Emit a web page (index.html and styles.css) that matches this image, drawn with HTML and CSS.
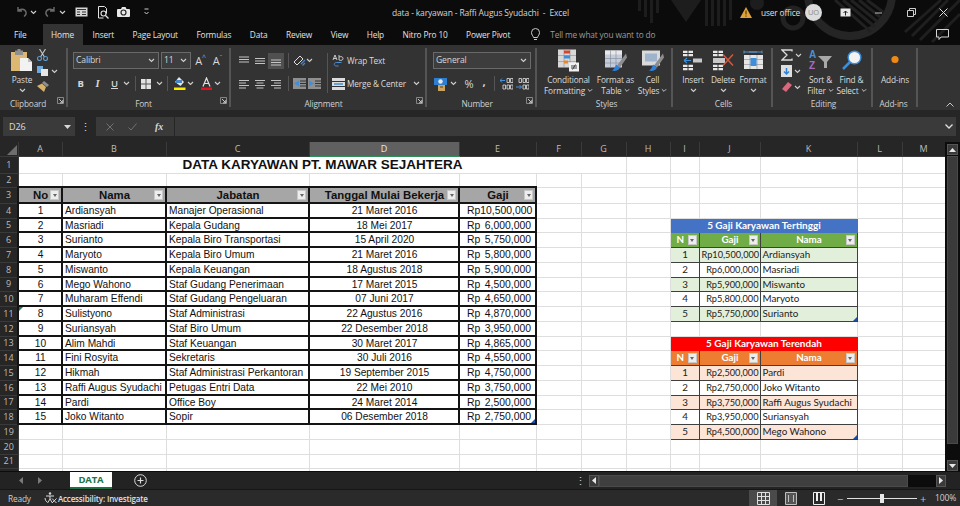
FILE: index.html
```html
<!DOCTYPE html>
<html lang="id">
<head>
<meta charset="utf-8">
<title>data - karyawan - Raffi Augus Syudachi - Excel</title>
<link rel="stylesheet" href="styles.css">
</head>
<body>
<svg class="defs" width="0" height="0">
  <symbol id="chev" viewBox="0 0 7 5"><path d="M1 1l2.500 2.500L6 1" fill="none" stroke="#d0d0d0" stroke-width="1.100"/></symbol>
  <symbol id="launch" viewBox="0 0 7 7"><path d="M.5 6.500V.5h6v6z" fill="none" stroke="#9a9a9a" stroke-width=".8"/><path d="M2 2l3.500 3.500M5.800 3v2.800H3" fill="none" stroke="#d8d8d8" stroke-width=".9"/></symbol>
  <symbol id="lines-l" viewBox="0 0 12 10"><path d="M1 1.500h10M1 4h7M1 6.500h10M1 9h7" stroke="#c4c4c4" stroke-width="1"/></symbol>
  <symbol id="lines-c" viewBox="0 0 12 10"><path d="M1 1.500h10M2.500 4h7M1 6.500h10M2.500 9h7" stroke="#c4c4c4" stroke-width="1"/></symbol>
  <symbol id="lines-r" viewBox="0 0 12 10"><path d="M1 1.500h10M4 4h7M1 6.500h10M4 9h7" stroke="#c4c4c4" stroke-width="1"/></symbol>
  <symbol id="cells" viewBox="0 0 10 6"><path d="M0 0h4.500v6H0zM5.500 0H10v6H5.500z" fill="#e8e8e8"/><path d="M0 3h10" stroke="#333" stroke-width="1"/></symbol>
</svg>

<header class="chrome">
  <svg class="pattern" width="960" height="45" viewBox="0 0 960 45">
    <g fill="#1d1d1d">
      <path d="M638 0h3v11h-3zM644 0h3v17h-3zM650 0h3v23h-3zM656 0h3v13h-3z"/>
      <path d="M671 0h30l-15 22z"/>
      <path d="M705 0h3v26h-3zM711 0h3v26h-3zM717 0h3v26h-3zM723 0h3v26h-3zM729 0h3v20h-3z"/>
      <circle cx="757" cy="3" r="7"/>
    </g>
    <circle cx="793" cy="18" r="10" fill="none" stroke="#222" stroke-width="5"/>
    <circle cx="850" cy="-6" r="42" fill="none" stroke="#252525" stroke-width="8"/>
    <path d="M835 0l36 32M843 0l32 27M851 0l27 22M859 0l21 17M867 0l16 12" stroke="#212121" stroke-width="3"/>
    <path d="M905 32l36-32M912 36l36-36M920 40l40-40M932 42l28-28" stroke="#1f1f1f" stroke-width="3"/>
  </svg>
  <div class="titlebar">
    <div class="qat">
      <svg class="q1" width="13" height="12" viewBox="0 0 13 12"><path d="M3 1v4h4M3 5c2-2.500 7-2.500 8 1 .5 2-.5 3.500-2 4.500" fill="none" stroke="#6a6a6a" stroke-width="1.400"/></svg>
      <svg class="qc" width="7" height="5"><use href="#chev" class="dim"/></svg>
      <svg class="q2" width="13" height="12" viewBox="0 0 13 12"><path d="M10 1v4H6M10 5C8 2.500 3 2.500 2 6c-.5 2 .5 3.500 2 4.500" fill="none" stroke="#6a6a6a" stroke-width="1.400"/></svg>
      <svg class="qc" width="7" height="5"><use href="#chev" class="dim"/></svg>
      <svg class="q3" width="13" height="10" viewBox="0 0 13 10"><path d="M.5.500h12v9H.5z" fill="#d6d6d6"/><path d="M2 2.500h9M2 5h3M7 5h4M2 7.500h3M7 7.500h4" stroke="#333" stroke-width="1"/></svg>
      <svg class="q4" width="12" height="13" viewBox="0 0 12 13"><path d="M1.500.500h6l2 2v5M1.500.500v11.500h5" fill="none" stroke="#e4e4e4" stroke-width="1"/><circle cx="6.500" cy="7.500" r="2.500" fill="none" stroke="#e4e4e4" stroke-width="1.100"/><path d="M8.500 9.500l3 3" stroke="#e4e4e4" stroke-width="1.300"/></svg>
      <svg class="q5" width="13" height="10" viewBox="0 0 13 10"><path d="M1 2h3l1-2h3.500l1 2H12a1 1 0 0 1 1 1v6a1 1 0 0 1-1 1H1a1 1 0 0 1-1-1V3a1 1 0 0 1 1-1z" fill="#e8e8e8"/><circle cx="6.500" cy="5.500" r="2.500" fill="none" stroke="#222" stroke-width="1.200"/></svg>
      <svg class="q6" width="7" height="8" viewBox="0 0 7 8"><path d="M1.500 1h4M1.500 4l2 2 2-2" fill="none" stroke="#cfcfcf" stroke-width="1"/></svg>
    </div>
    <div class="doc">data - karyawan - Raffi Augus Syudachi &nbsp;-&nbsp; Excel</div>
    <div class="winbar">
      <svg class="warn" width="12" height="11" viewBox="0 0 12 11"><path d="M6 0l6 11H0z" fill="#e0a23a"/><path d="M6 3.500v4M6 8.500v1.200" stroke="#3a2a00" stroke-width="1"/></svg>
      <span class="user">user office</span>
      <span class="avatar">UO</span>
      <svg class="w1" width="11" height="9" viewBox="0 0 11 9"><path d="M.5.500h10v8H.5z" fill="#e6e6e6"/><path d="M5.500 7.500V3M3.500 5l2-2 2 2" fill="none" stroke="#222" stroke-width="1"/></svg>
      <svg class="w2" width="9" height="9" viewBox="0 0 9 9"><path d="M1 5h7" stroke="#bdbdbd" stroke-width="1"/></svg>
      <svg class="w3" width="9" height="9" viewBox="0 0 9 9"><path d="M.5 2.500h6v6h-6zM2.500 2.500v-2h6v6h-2" fill="none" stroke="#cfcfcf" stroke-width="1"/></svg>
      <svg class="w4" width="9" height="9" viewBox="0 0 9 9"><path d="M.5.500l8 8M8.500.500l-8 8" stroke="#dedede" stroke-width="1"/></svg>
    </div>
  </div>
  <nav class="tabs">
    <span class="tab file">File</span>
    <span class="tab home">Home</span>
    <span class="tab">Insert</span>
    <span class="tab">Page Layout</span>
    <span class="tab">Formulas</span>
    <span class="tab">Data</span>
    <span class="tab">Review</span>
    <span class="tab">View</span>
    <span class="tab">Help</span>
    <span class="tab">Nitro Pro 10</span>
    <span class="tab">Power Pivot</span>
    <svg class="bulb" width="9" height="13" viewBox="0 0 9 13"><path d="M2.500 9.500C2 7.500.5 7 .5 4.500a4 4 0 0 1 8 0c0 2.500-1.500 3-2 5zM3 11.500h3" fill="none" stroke="#c8c8c8" stroke-width="1"/></svg>
    <span class="tell">Tell me what you want to do</span>
    <svg class="comment" width="13" height="11" viewBox="0 0 13 11"><path d="M.5.500h12v7.500H5L3 10.500V8H.5z" fill="none" stroke="#d4d4d4" stroke-width="1"/></svg>
  </nav>
</header>

<section class="ribbon">
  <div class="grp g-clip">
    <div class="body clip-body">
      <div class="big paste">
        <svg width="24" height="23" viewBox="0 0 24 23"><path d="M1 3h16v19H1z" fill="#dcb873"/><path d="M5 1.500h8V6H5z" fill="#8f8f8f"/><path d="M7.500 0h3v2h-3z" fill="#8f8f8f"/><path d="M10 9h8l4 4v9H10z" fill="#f2f2f2"/><path d="M18 9v4h4" fill="#bdbdbd"/></svg>
        <span>Paste</span>
        <svg class="c" width="7" height="5"><use href="#chev"/></svg>
      </div>
      <div class="clip-side">
        <svg width="11" height="12" viewBox="0 0 11 12"><path d="M2.500 0l5 8M8.500 0l-5 8" stroke="#c8c8c8" stroke-width="1.100"/><circle cx="2.500" cy="9.500" r="2" fill="none" stroke="#5b9bd5" stroke-width="1.100"/><circle cx="8.500" cy="9.500" r="2" fill="none" stroke="#5b9bd5" stroke-width="1.100"/></svg>
        <div class="copy"><svg width="11" height="10" viewBox="0 0 11 10"><path d="M0 0h6v7H0z" fill="#6fa8dc"/><path d="M4 3h7v7H4z" fill="#e6e6e6"/></svg><svg width="7" height="5"><use href="#chev"/></svg></div>
        <svg width="12" height="11" viewBox="0 0 12 11"><path d="M7 0l5 4-2 2-5-4z" fill="#8f8f8f"/><path d="M5 2.500L9 6l-2 5-7-6z" fill="#d9b26c"/></svg>
      </div>
    </div>
    <div class="lbl"><span>Clipboard</span><svg class="launch" width="7" height="7"><use href="#launch"/></svg></div>
  </div>

  <div class="grp g-font">
    <div class="body rows">
      <div class="row">
        <div class="field name"><span>Calibri</span><svg width="7" height="5"><use href="#chev"/></svg></div>
        <div class="field size"><span>11</span><svg width="7" height="5"><use href="#chev"/></svg></div>
        <span class="t a1">A<sup>^</sup></span>
        <span class="t a2">A<sup>ˇ</sup></span>
      </div>
      <div class="row">
        <span class="t b">B</span><span class="t i">I</span><span class="t u">U</span>
        <svg class="cv" width="7" height="5"><use href="#chev"/></svg>
        <span class="sep s5"></span>
        <span class="t w20"><svg width="10" height="10" viewBox="0 0 10 10"><path d="M0 0h10v10H0z" fill="#e2e2e2"/><path d="M5 0v10M0 5h10" stroke="#555" stroke-width="1"/></svg></span>
        <svg class="cv" width="7" height="5"><use href="#chev"/></svg>
        <span class="sep s4"></span>
        <span class="t"><svg width="13" height="13" viewBox="0 0 13 13"><path d="M6 0l5 5-3.500 4L2 5z" fill="#e6e6e6"/><path d="M3 3h6v3H3z" fill="#4a86c5"/><path d="M1 10.500h11.500V13H1z" fill="#ffeb00"/></svg></span>
        <svg class="cv" width="7" height="5"><use href="#chev"/></svg>
        <span class="t ml4"><svg width="13" height="13" viewBox="0 0 13 13"><path d="M3 9.500L6.500 1 10 9.500M4.500 6.500h4" fill="none" stroke="#e2e2e2" stroke-width="1.200"/><path d="M1 10.500h11V13H1z" fill="#e8101c"/></svg></span>
        <svg class="cv" width="7" height="5"><use href="#chev"/></svg>
      </div>
    </div>
    <div class="lbl shift"><span>Font</span><svg class="launch" width="7" height="7"><use href="#launch"/></svg></div>
  </div>

  <div class="grp g-align">
    <div class="body align-body">
      <div class="rows align-l">
        <div class="row">
          <span class="t"><svg width="12" height="10" viewBox="0 0 12 10"><path d="M1 1h10M1 3.500h10M1 6h10" stroke="#c4c4c4"/></svg></span>
          <span class="t"><svg width="12" height="10" viewBox="0 0 12 10"><path d="M1 2.500h10M1 5h10M1 7.500h10" stroke="#c4c4c4"/></svg></span>
          <span class="t on"><svg width="12" height="10" viewBox="0 0 12 10"><path d="M1 4h10M1 6.500h10M1 9h10" stroke="#c4c4c4"/></svg></span>
          <span class="sep s3"></span>
          <span class="t w14"><svg width="13" height="12" viewBox="0 0 13 12"><path d="M1 7l6-6 3 3-6 6z" fill="none" stroke="#dedede"/><path d="M8 9l4-4M9.500 10.500l2.500-2.500" stroke="#4a86c5" stroke-width="1.200"/></svg></span>
          <svg class="cv" width="7" height="5"><use href="#chev"/></svg>
        </div>
        <div class="row">
          <span class="t"><svg width="12" height="10"><use href="#lines-l"/></svg></span>
          <span class="t"><svg width="12" height="10"><use href="#lines-c"/></svg></span>
          <span class="t"><svg width="12" height="10"><use href="#lines-r"/></svg></span>
          <span class="sep s3"></span>
          <span class="t w14"><svg width="13" height="11" viewBox="0 0 13 11"><path d="M0 0h13v11H0z" fill="#8f8f8f"/><path d="M7 3h6M7 5.500h6M7 8h6" stroke="#333"/><path d="M6 2.500v6L1 5.500z" fill="#3f8fd8"/></svg></span>
          <span class="t w17"><svg width="13" height="11" viewBox="0 0 13 11"><path d="M0 0h13v11H0z" fill="#8f8f8f"/><path d="M7 3h6M7 5.500h6M7 8h6" stroke="#333"/><path d="M1 2.500v6l5-3z" fill="#3f8fd8"/></svg></span>
        </div>
      </div>
      <span class="sep tall"></span>
      <div class="rows align-r">
        <div class="row">
          <svg width="13" height="13" viewBox="0 0 13 13"><path d="M1 6l2-5 2 5M1.700 4.500h2.600M7 1v5c2.500 1 4 0 4-1.500S9.500 2 7 3" fill="none" stroke="#d6d6d6" stroke-width=".9"/><path d="M9.500 8.500h-5c-3 0-3 3.500 0 3.500h2" fill="none" stroke="#4a90d9" stroke-width="1"/></svg>
          <span class="txt">Wrap Text</span>
        </div>
        <div class="row">
          <svg width="13" height="12" viewBox="0 0 13 12"><path d="M0 0h13v12H0z" fill="#dcdcdc"/><path d="M0 3.500h13M0 8.500h13" stroke="#333"/><path d="M2 6h9" stroke="#3f8fd8" stroke-width="1.500"/></svg>
          <span class="txt">Merge &amp; Center</span>
          <svg class="cv mchev" width="7" height="5"><use href="#chev"/></svg>
        </div>
      </div>
    </div>
    <div class="lbl shift"><span>Alignment</span><svg class="launch" width="7" height="7"><use href="#launch"/></svg></div>
  </div>

  <div class="grp g-num">
    <div class="body rows">
      <div class="row"><div class="field general"><span>General</span><svg width="7" height="5"><use href="#chev"/></svg></div></div>
      <div class="row num-tools">
        <span class="t w14"><svg width="14" height="14" viewBox="0 0 14 14"><path d="M0 1h13v7H0z" fill="#2f7fd0"/><circle cx="6.500" cy="4.500" r="2.200" fill="#e8e8e8"/><path d="M4 8h7v6H4z" fill="#c9a35f"/><path d="M6 10h3" stroke="#5a4420"/></svg></span>
        <svg class="cv" width="7" height="5"><use href="#chev"/></svg>
        <span class="t pct">%</span>
        <span class="t comma">,</span>
        <span class="sep s4"></span>
        <span class="t dec"><svg width="13" height="13" viewBox="0 0 13 13"><path d="M0 3.500h5M0 3.500l2-2M0 3.500l2 2" fill="none" stroke="#4a90d9"/><path d="M7 1.500h2.500v4H7zM10.500 1.500H13v4h-2.500zM3 8h2.500v4H3zM7 8h2.500v4H7zM10.500 8H13v4h-2.500z" fill="none" stroke="#cfcfcf" stroke-width=".9"/></svg></span>
        <span class="t dec"><svg width="13" height="13" viewBox="0 0 13 13"><path d="M3 1.500h2.500v4H3zM7 1.500h2.500v4H7zM10.500 1.500H13v4h-2.500zM7 8h2.500v4H7zM10.500 8H13v4h-2.500z" fill="none" stroke="#cfcfcf" stroke-width=".9"/><path d="M0 10h5.500M5.500 10l-2-2M5.500 10l-2 2" fill="none" stroke="#4a90d9"/></svg></span>
      </div>
    </div>
    <div class="lbl shift"><span>Number</span><svg class="launch" width="7" height="7"><use href="#launch"/></svg></div>
  </div>

  <div class="grp g-styles">
    <div class="body bigs">
      <div class="big w49">
        <svg width="21" height="22" viewBox="0 0 21 22"><path d="M0 0h18v18H0z" fill="#d8d8d8"/><path d="M6 0v18M12 0v18M0 6h18M0 12h18" stroke="#8c8c8c" stroke-width=".6"/><path d="M6 1h6v3H6z" fill="#d8452e"/><path d="M6 6h6v3H6z" fill="#3f8fd8"/><path d="M6 11h4v3H6z" fill="#e8862e"/><path d="M11 13h10v9H11z" fill="#f0f0f0"/><path d="M13 16.500h6M13 18.500h6M17.500 15l-3 5" stroke="#333" stroke-width=".9"/></svg>
        <span>Conditional</span><span>Formatting <svg width="6" height="5"><use href="#chev"/></svg></span>
      </div>
      <div class="big w45">
        <svg width="22" height="22" viewBox="0 0 22 22"><path d="M0 1h17v17H0z" fill="#c3ccd8"/><path d="M0 1h17v4H0z" fill="#e8e8e8"/><path d="M5.500 1v17M11 1v17M0 9h17M0 13.500h17" stroke="#7f8a99" stroke-width=".6"/><path d="M21 4l-9 12 3 2 7-10z" fill="#8d8d8d"/><path d="M11 15l4 3c-1 3-5 4-8 3 2-1 3-3 4-6z" fill="#2f80d8"/></svg>
        <span>Format as</span><span>Table <svg width="6" height="5"><use href="#chev"/></svg></span>
      </div>
      <div class="big w29">
        <svg width="22" height="22" viewBox="0 0 22 22"><path d="M0 1h18v15H0z" fill="#dadada"/><path d="M3 4h12v8H3z" fill="#9db4cc"/><path d="M21 4l-9 12 3 2 7-10z" fill="#8d8d8d"/><path d="M11 15l4 3c-1 3-5 4-8 3 2-1 3-3 4-6z" fill="#2f80d8"/></svg>
        <span>Cell</span><span>Styles <svg width="6" height="5"><use href="#chev"/></svg></span>
      </div>
    </div>
    <div class="lbl"><span>Styles</span></div>
  </div>

  <div class="grp g-cells">
    <div class="body bigs">
      <div class="big w30">
        <svg width="20" height="20" viewBox="0 0 20 20"><use href="#cells" x="0" y="0" width="10" height="6"/><use href="#cells" x="0" y="14" width="10" height="6"/><path d="M10 8h9v4h-9z" fill="#c8c8c8"/><path d="M1 10h7M1 10l3-2.500M1 10l3 2.500" fill="none" stroke="#3f8fd8" stroke-width="1.100"/></svg>
        <span>Insert</span><svg class="c" width="7" height="5"><use href="#chev"/></svg>
      </div>
      <div class="big w30">
        <svg width="21" height="20" viewBox="0 0 21 20"><use href="#cells" x="0" y="0" width="10" height="6"/><use href="#cells" x="0" y="14" width="10" height="6"/><path d="M0 7.500h12v5H0z" fill="#c8c8c8"/><path d="M10 4l10 11M20 4L10 15" stroke="#d8563a" stroke-width="1.500"/></svg>
        <span>Delete</span><svg class="c" width="7" height="5"><use href="#chev"/></svg>
      </div>
      <div class="big w30">
        <svg width="21" height="21" viewBox="0 0 21 21"><path d="M1 2h18M1 .500v3M19 .500v3M6 2h8" stroke="#5b9bd5" stroke-width=".9"/><path d="M1 5h19v14H1z" fill="#e6e6e6"/><path d="M7 5v14M14 5v14M1 9.500h19M1 14.500h19" stroke="#888" stroke-width=".6"/><path d="M7.500 8h6v8h-6z" fill="#3f8fd8"/></svg>
        <span>Format</span><svg class="c" width="7" height="5"><use href="#chev"/></svg>
      </div>
    </div>
    <div class="lbl"><span>Cells</span></div>
  </div>

  <div class="grp g-edit">
    <div class="body bigs">
      <div class="edit-side">
        <div class="es"><svg width="12" height="12" viewBox="0 0 12 12"><path d="M11 2.500V1H1l5 5-5 5h10V9.500" fill="none" stroke="#dcdcdc" stroke-width="1.300"/></svg><svg width="7" height="5"><use href="#chev"/></svg></div>
        <div class="es"><svg width="11" height="12" viewBox="0 0 11 12"><path d="M0 0h11v12H0z" fill="#dedede"/><path d="M5.500 3v6M3 6.500l2.500 2.500L8 6.500" fill="none" stroke="#2f80d8" stroke-width="1.500"/></svg><svg width="7" height="5"><use href="#chev"/></svg></div>
        <div class="es"><svg width="11" height="10" viewBox="0 0 11 10"><path d="M7 0l4 3-6 7-4-3z" fill="#d8687e"/></svg><svg width="7" height="5"><use href="#chev"/></svg></div>
      </div>
      <div class="big w31">
        <svg width="23" height="23" viewBox="0 0 23 23"><text x="0" y="9" class="sa">A</text><text x="0" y="20" class="sz">Z</text><path d="M9 7h14l-5 6v6h-3v-6z" fill="#a8a8a8"/></svg>
        <span>Sort &amp;</span><span>Filter <svg width="6" height="5"><use href="#chev"/></svg></span>
      </div>
      <div class="big w31">
        <svg width="20" height="21" viewBox="0 0 20 21"><circle cx="12.500" cy="7.500" r="6.300" fill="#f2f2f2" stroke="#3f8fd8" stroke-width="1.500"/><path d="M8 12l-7 7" stroke="#3f8fd8" stroke-width="2.500"/></svg>
        <span>Find &amp;</span><span>Select <svg width="6" height="5"><use href="#chev"/></svg></span>
      </div>
    </div>
    <div class="lbl"><span>Editing</span></div>
  </div>

  <div class="grp g-add">
    <div class="body bigs">
      <div class="big w44">
        <svg width="22" height="22" viewBox="0 0 22 22"><circle cx="11" cy="10" r="3.600" fill="#f08a12"/></svg>
        <span>Add-ins</span>
      </div>
    </div>
    <div class="lbl"><span>Add-ins</span></div>
  </div>

  <div class="collapse"><svg width="8" height="5" viewBox="0 0 8 5"><path d="M.5 4.500L4 1l3.500 3.500" fill="none" stroke="#c8c8c8"/></svg></div>
</section>

<section class="formula">
  <div class="namebox"><span>D26</span><svg width="7" height="4" viewBox="0 0 7 4"><path d="M0 0h7L3.500 4z" fill="#d8d8d8"/></svg></div>
  <div class="dots">⋮</div>
  <div class="fbtns">
    <svg width="8" height="8" viewBox="0 0 8 8"><path d="M.5.500l7 7M7.500.500l-7 7" stroke="#707070" stroke-width="1"/></svg>
    <svg width="9" height="8" viewBox="0 0 9 8"><path d="M.5 4.500L3 7l5.500-6.500" fill="none" stroke="#707070" stroke-width="1"/></svg>
    <span class="fx">fx</span>
  </div>
  <div class="finput"><svg width="8" height="5" viewBox="0 0 8 5"><path d="M.5.500L4 4 7.500.500" fill="none" stroke="#e0e0e0" stroke-width="1.300"/></svg></div>
</section>

<section class="sheet">
  <div class="gridwrap">
    <table class="grid">
      <colgroup><col class="c0"><col class="ca"><col class="cb"><col class="cc"><col class="cd"><col class="ce"><col class="cf"><col class="cg"><col class="ch"><col class="ci"><col class="cj"><col class="ck"><col class="cl"><col class="cm"></colgroup>
      <thead>
        <tr class="h14"><th class="corner"><svg width="10" height="10" viewBox="0 0 10 10"><path d="M10 0v10H0z" fill="#6e6e6e"/></svg></th><th>A</th><th>B</th><th>C</th><th class="sel">D</th><th>E</th><th>F</th><th>G</th><th>H</th><th>I</th><th>J</th><th>K</th><th>L</th><th>M</th></tr>
      </thead>
      <tbody>
        <tr class="h17"><th>1</th><td colspan="7" class="title">DATA KARYAWAN PT. MAWAR SEJAHTERA</td><td></td><td></td><td></td><td></td><td></td><td></td></tr>
        <tr class="h14"><th>2</th><td></td><td></td><td></td><td></td><td></td><td></td><td></td><td></td><td></td><td></td><td></td><td></td><td></td></tr>
        <tr class="h16"><th>3</th><td class="d hd">No<i class="f"></i></td><td class="d hd">Nama<i class="f"></i></td><td class="d hd">Jabatan<i class="f"></i></td><td class="d hd">Tanggal Mulai Bekerja<i class="f"></i></td><td class="d hd">Gaji<i class="f"></i></td><td></td><td></td><td></td><td></td><td></td><td></td><td></td><td></td></tr>
        <tr class="h15"><th>4</th><td class="d c">1</td><td class="d">Ardiansyah</td><td class="d">Manajer Operasional</td><td class="d c">21 Maret 2016</td><td class="d"><div class="rp"><span>Rp</span><span>10,500,000</span></div></td><td></td><td></td><td></td><td></td><td></td><td></td><td></td><td></td></tr>
        <tr class="h14"><th>5</th><td class="d c">2</td><td class="d">Masriadi</td><td class="d">Kepala Gudang</td><td class="d c">18 Mei 2017</td><td class="d"><div class="rp"><span>Rp</span><span>6,000,000</span></div></td><td></td><td></td><td></td><td colspan="3" class="ttl blue-t">5 Gaji Karyawan Tertinggi</td><td></td><td></td></tr>
        <tr class="h15"><th>6</th><td class="d c">3</td><td class="d">Surianto</td><td class="d">Kepala Biro Transportasi</td><td class="d c">15 April 2020</td><td class="d"><div class="rp"><span>Rp</span><span>5,750,000</span></div></td><td></td><td></td><td></td><td class="x xh gh nn">N<i class="f"></i></td><td class="x xh gh">Gaji<i class="f"></i></td><td class="x xh gh">Nama<i class="f"></i></td><td></td><td></td></tr>
        <tr class="h15"><th>7</th><td class="d c">4</td><td class="d">Maryoto</td><td class="d">Kepala Biro Umum</td><td class="d c">21 Maret 2016</td><td class="d"><div class="rp"><span>Rp</span><span>5,800,000</span></div></td><td></td><td></td><td></td><td class="x c gz">1</td><td class="x r gz">Rp10,500,000</td><td class="x gz">Ardiansyah</td><td></td><td></td></tr>
        <tr class="h15"><th>8</th><td class="d c">5</td><td class="d">Miswanto</td><td class="d">Kepala Keuangan</td><td class="d c">18 Agustus 2018</td><td class="d"><div class="rp"><span>Rp</span><span>5,900,000</span></div></td><td></td><td></td><td></td><td class="x c">2</td><td class="x r">Rp6,000,000</td><td class="x">Masriadi</td><td></td><td></td></tr>
        <tr class="h14"><th>9</th><td class="d c">6</td><td class="d">Mego Wahono</td><td class="d">Staf Gudang Penerimaan</td><td class="d c">17 Maret 2015</td><td class="d"><div class="rp"><span>Rp</span><span>4,500,000</span></div></td><td></td><td></td><td></td><td class="x c gz">3</td><td class="x r gz">Rp5,900,000</td><td class="x gz">Miswanto</td><td></td><td></td></tr>
        <tr class="h15"><th>10</th><td class="d c">7</td><td class="d">Muharam Effendi</td><td class="d">Staf Gudang Pengeluaran</td><td class="d c">07 Juni 2017</td><td class="d"><div class="rp"><span>Rp</span><span>4,650,000</span></div></td><td></td><td></td><td></td><td class="x c">4</td><td class="x r">Rp5,800,000</td><td class="x">Maryoto</td><td></td><td></td></tr>
        <tr class="h15"><th>11</th><td class="d c err">8</td><td class="d">Sulistyono</td><td class="d">Staf Administrasi</td><td class="d c">22 Agustus 2016</td><td class="d"><div class="rp"><span>Rp</span><span>4,870,000</span></div></td><td></td><td></td><td></td><td class="x c gz">5</td><td class="x r gz">Rp5,750,000</td><td class="x gz grip">Surianto</td><td></td><td></td></tr>
        <tr class="h15"><th>12</th><td class="d c">9</td><td class="d">Suriansyah</td><td class="d">Staf Biro Umum</td><td class="d c">22 Desember 2018</td><td class="d"><div class="rp"><span>Rp</span><span>3,950,000</span></div></td><td></td><td></td><td></td><td></td><td></td><td></td><td></td><td></td></tr>
        <tr class="h14"><th>13</th><td class="d c">10</td><td class="d">Alim Mahdi</td><td class="d">Staf Keuangan</td><td class="d c">30 Maret 2017</td><td class="d"><div class="rp"><span>Rp</span><span>4,865,000</span></div></td><td></td><td></td><td></td><td colspan="3" class="ttl red-t">5 Gaji Karyawan Terendah</td><td></td><td></td></tr>
        <tr class="h15"><th>14</th><td class="d c">11</td><td class="d">Fini Rosyita</td><td class="d">Sekretaris</td><td class="d c">30 Juli 2016</td><td class="d"><div class="rp"><span>Rp</span><span>4,550,000</span></div></td><td></td><td></td><td></td><td class="x xh oh nn">N<i class="f"></i></td><td class="x xh oh">Gaji<i class="f"></i></td><td class="x xh oh">Nama<i class="f"></i></td><td></td><td></td></tr>
        <tr class="h15"><th>15</th><td class="d c">12</td><td class="d">Hikmah</td><td class="d">Staf Administrasi Perkantoran</td><td class="d c">19 September 2015</td><td class="d"><div class="rp"><span>Rp</span><span>4,750,000</span></div></td><td></td><td></td><td></td><td class="x c oz">1</td><td class="x r oz">Rp2,500,000</td><td class="x oz">Pardi</td><td></td><td></td></tr>
        <tr class="h15"><th>16</th><td class="d c">13</td><td class="d">Raffi Augus Syudachi</td><td class="d">Petugas Entri Data</td><td class="d c">22 Mei 2010</td><td class="d"><div class="rp"><span>Rp</span><span>3,750,000</span></div></td><td></td><td></td><td></td><td class="x c">2</td><td class="x r">Rp2,750,000</td><td class="x">Joko Witanto</td><td></td><td></td></tr>
        <tr class="h14"><th>17</th><td class="d c">14</td><td class="d">Pardi</td><td class="d">Office Boy</td><td class="d c">24 Maret 2014</td><td class="d"><div class="rp"><span>Rp</span><span>2,500,000</span></div></td><td></td><td></td><td></td><td class="x c oz">3</td><td class="x r oz">Rp3,750,000</td><td class="x oz">Raffi Augus Syudachi</td><td></td><td></td></tr>
        <tr class="h15"><th>18</th><td class="d c">15</td><td class="d">Joko Witanto</td><td class="d">Sopir</td><td class="d c">06 Desember 2018</td><td class="d grip"><div class="rp"><span>Rp</span><span>2,750,000</span></div></td><td></td><td></td><td></td><td class="x c">4</td><td class="x r">Rp3,950,000</td><td class="x">Suriansyah</td><td></td><td></td></tr>
        <tr class="h15"><th>19</th><td></td><td></td><td></td><td></td><td></td><td></td><td></td><td></td><td class="x c oz">5</td><td class="x r oz">Rp4,500,000</td><td class="x oz grip">Mego Wahono</td><td></td><td></td></tr>
        <tr class="h15"><th>20</th><td></td><td></td><td></td><td></td><td></td><td></td><td></td><td></td><td></td><td></td><td></td><td></td><td></td></tr>
        <tr class="h14"><th>21</th><td></td><td></td><td></td><td></td><td></td><td></td><td></td><td></td><td></td><td></td><td></td><td></td><td></td></tr>
        <tr class="h14"><th></th><td></td><td></td><td></td><td></td><td></td><td></td><td></td><td></td><td></td><td></td><td></td><td></td><td></td></tr>
      </tbody>
    </table>
  </div>
  <div class="vscroll">
    <span class="sbtn"><svg width="7" height="4" viewBox="0 0 7 4"><path d="M0 4h7L3.500 0z" fill="#e8e8e8"/></svg></span>
    <span class="vthumb"></span>
    <span class="sbtn"><svg width="7" height="4" viewBox="0 0 7 4"><path d="M0 0h7L3.500 4z" fill="#e8e8e8"/></svg></span>
  </div>
</section>

<section class="sheetbar">
  <div class="nav">
    <svg width="4" height="7" viewBox="0 0 4 7"><path d="M4 0v7L0 3.500z" fill="#7a7a7a"/></svg>
    <svg width="4" height="7" viewBox="0 0 4 7"><path d="M0 0v7l4-3.500z" fill="#7a7a7a"/></svg>
  </div>
  <div class="sheettab">DATA</div>
  <svg class="addsheet" width="13" height="13" viewBox="0 0 13 13"><circle cx="6.500" cy="6.500" r="5.800" fill="none" stroke="#dcdcdc" stroke-width="1"/><path d="M6.500 3.500v6M3.500 6.500h6" stroke="#dcdcdc" stroke-width="1.200"/></svg>
  <div class="sdots">⋮</div>
  <div class="hscroll">
    <span class="sbtn"><svg width="4" height="7" viewBox="0 0 4 7"><path d="M4 0v7L0 3.500z" fill="#e8e8e8"/></svg></span>
    <span class="hthumb"></span>
    <span class="hvoid"></span>
    <span class="sbtn"><svg width="4" height="7" viewBox="0 0 4 7"><path d="M0 0v7l4-3.500z" fill="#e8e8e8"/></svg></span>
  </div>
</section>

<footer class="status">
  <span class="ready">Ready</span>
  <svg class="acc" width="13" height="12" viewBox="0 0 13 12"><circle cx="6" cy="1.500" r="1.200" fill="#d8d8d8"/><path d="M2 4h8M6 4v3L3.500 11M6 7l2.500 4M1 6a5 5 0 0 0 2 4" fill="none" stroke="#d8d8d8" stroke-width="1"/><path d="M8 6.500l4.500 4.500M12.500 6.500L8 11" stroke="#d8d8d8"/></svg>
  <span class="accs">Accessibility: Investigate</span>
  <div class="views">
    <span class="view on"><svg width="13" height="13" viewBox="0 0 13 13"><path d="M.5.500h12v12H.5zM4.500.500v12M8.500.500v12M.5 4.500h12M.5 8.500h12" fill="none" stroke="#e0e0e0"/></svg></span>
    <span class="view"><svg width="12" height="13" viewBox="0 0 12 13"><path d="M.5.500h11v12H.5z" fill="#555" stroke="#bdbdbd"/><path d="M3.500 3v7M8.500 3v7" stroke="#bdbdbd"/></svg></span>
    <span class="view"><svg width="12" height="13" viewBox="0 0 12 13"><path d="M.5.500h11v12H.5z" fill="none" stroke="#f0f0f0"/><path d="M3 1h2v8H3zM7 1h2v8H7z" fill="#f0f0f0"/></svg></span>
  </div>
  <div class="zoomer">
    <span class="zm">−</span>
    <span class="track"><i class="knob"></i></span>
    <span class="zm">+</span>
    <span class="pc">100%</span>
  </div>
</footer>
</body>
</html>
```

FILE: styles.css
```css
* { box-sizing: border-box; }
html, body { margin: 0; padding: 0; }
body {
  width: 960px; height: 506px; overflow: hidden;
  background: #262626; color: #d8d8d8;
  font: 8.3px/11px "Open Sans", sans-serif;
  letter-spacing: -.15px;
}
svg { display: block; flex: none; }
.defs { position: absolute; }

/* header */
.chrome { position: relative; height: 45px; background: #0b0b0b; }
.pattern { position: absolute; left: 0; top: 0; }
.titlebar { position: relative; height: 24px; display: flex; align-items: center; }
.qat { width: 392px; display: flex; align-items: center; padding-left: 15px; }
.qc { margin-left: 2px; }
.q2 { margin-left: 7px; }
.q3 { margin-left: 9px; }
.q4 { margin-left: 9px; }
.q5 { margin-left: 8px; }
.q6 { margin-left: 13px; }
.doc { color: #d6d6d6; font-size: 8.5px; white-space: nowrap; }
.winbar { margin-left: auto; display: flex; align-items: center; padding-right: 12px; }
.warn { margin-right: 9px; }
.user { font-size: 8.3px; color: #e0e0e0; }
.avatar { width: 17px; height: 17px; border-radius: 50%; background: #dcdcdc; color: #8a8a8a; font-size: 7.5px; line-height: 17px; text-align: center; margin-left: 5px; }
.w1 { margin-left: 18px; }
.w2 { margin-left: 23px; }
.w3 { margin-left: 24px; }
.w4 { margin-left: 23px; }
.tabs { position: relative; height: 21px; display: flex; align-items: center; gap: 18.5px; padding-left: 14px; }
.tab { color: #e4e4e4; white-space: nowrap; }
.tab.home { background: #333; height: 21px; line-height: 21px; width: 40px; text-align: center; margin: 0 -8.500px 0 -2.500px; }
.bulb { margin-left: 2.500px; }
.tell { color: #9c9c9c; margin-left: -8.500px; white-space: nowrap; }
.comment { margin-left: auto; margin-right: 11px; }

/* ribbon */
.ribbon { position: relative; height: 65px; background: #333; display: flex; }
.grp { display: flex; flex-direction: column; position: relative; flex: none; }
.grp::after { content: ""; position: absolute; right: 0; top: 3px; bottom: 3px; width: 2px; background: #555; }
.g-clip { width: 68px; }
.g-font { width: 163px; padding-left: 4px; }
.g-align { width: 196px; padding-left: 5px; }
.g-num { width: 110px; padding-left: 6px; }
.g-styles { width: 136px; padding-left: 7px; }
.g-cells { width: 100px; padding-left: 5px; }
.g-edit { width: 100px; padding-left: 5px; }
.g-add { width: 45px; }
.body { height: 52px; flex: none; }
.lbl { flex: 1; display: flex; align-items: center; justify-content: center; position: relative; color: #d0d0d0; padding-bottom: 1px; margin-right: 4px; }
.lbl.shift { padding-right: 12px; }
.launch { position: absolute; right: 0; top: 0; }
.g-clip .lbl { justify-content: flex-start; padding-left: 10px; }
.collapse { position: absolute; right: 6px; bottom: 3px; }

.clip-body { display: flex; padding: 4px 0 0 9px; }
.paste { width: 26px; }
.clip-side { display: flex; flex-direction: column; gap: 5px; margin-left: 2px; }
.copy { display: flex; align-items: center; gap: 3px; }
.big { display: flex; flex-direction: column; align-items: center; flex: none; line-height: 11px; color: #dcdcdc; white-space: nowrap; }
.big > svg:first-child { height: 23px; margin-bottom: 2px; }
.big > span { display: inline-flex; align-items: center; gap: 2px; }
.big .c { margin-top: 3px; }
.bigs { display: flex; padding-top: 4px; }
.w49 { width: 49px; } .w45 { width: 45px; } .w29 { width: 29px; }
.w30 { width: 30px; } .w31 { width: 31px; } .w44 { width: 44px; }

.rows { display: flex; flex-direction: column; }
.row { display: flex; align-items: center; height: 23px; flex: none; }
.g-font .rows, .g-num .rows { padding-top: 4px; }
.field { height: 17px; display: flex; align-items: center; justify-content: space-between; padding: 0 3px 0 2px; background: #3d3d3d; border: 1px solid #6a6a6a; color: #d8d8d8; font-size: 8.6px; }
.name { width: 86px; margin-left: 1px; }
.size { width: 30px; margin-left: 2px; }
.general { width: 98px; }
.t { width: 16px; height: 16px; flex: none; display: flex; align-items: center; justify-content: center; color: #d8d8d8; }
.t.on { background: #505050; }
.a1, .a2 { font-size: 11px; width: 17px; }
.a1 { margin-left: 1px; }
.a1 sup, .a2 sup { font-size: 7px; line-height: 5px; color: #6aa9e0; margin-top: -6px; }
.b { font-weight: 700; width: 17px; font-size: 9.500px; }
.i { font-style: italic; width: 17px; font-family: "Liberation Serif", serif; font-size: 10.500px; font-weight: 700; }
.u { text-decoration: underline; width: 17px; font-size: 9.500px; font-weight: 600; }
.cv { flex: none; }
.sep { width: 1px; height: 15px; background: #555; flex: none; }
.s5 { margin: 0 0 0 5px; }
.s4 { margin: 0 3px 0 4px; }
.s3 { margin: 0 3px 0 4px; }
.tall { height: 40px; margin: 4px 3px 0 3px; }
.w20 { width: 20px; }
.w14 { width: 14px; }
.w17 { width: 17px; margin-left: 0; }
.ml4 { margin-left: 4px; }
.align-body { display: flex; padding-top: 4px; }
.align-l { width: 88px; }
.align-r .row { gap: 1px; }
.align-r { padding-left: 1px; }
.txt { color: #dcdcdc; white-space: nowrap; margin-left: 1px; }
.mchev { margin-left: 6px; }
.num-tools .w14 { margin-left: 1px; }
.num-tools .cv { margin: 0 3px 0 2px; }
.pct { font-size: 11px; width: 18px; }
.comma { font-size: 11px; font-weight: 700; width: 12px; margin-bottom: 5px; }
.dec { width: 16px; }
.edit-side { display: flex; flex-direction: column; gap: 4px; width: 27px; padding-left: 3px; }
.es { display: flex; align-items: center; gap: 2px; height: 12px; }
.sa { font: 700 10px "Liberation Sans", sans-serif; fill: #4a90d9; }
.sz { font: 700 10px "Liberation Sans", sans-serif; fill: #a56cc1; }

/* formula bar */
.formula { height: 19px; margin-top: 7px; display: flex; align-items: stretch; background: #262626; padding-left: 3px; padding-right: 4px; }
.namebox { width: 72px; background: #3a3a3a; display: flex; align-items: center; justify-content: space-between; padding: 0 4px 0 6px; font-size: 9px; color: #dcdcdc; }
.dots { width: 21px; text-align: center; line-height: 19px; font-size: 11px; color: #dcdcdc; }
.fbtns { width: 78px; background: #3a3a3a; display: flex; align-items: center; padding-left: 10px; gap: 14px; }
.fx { font: italic 700 10px/19px "Liberation Serif", serif; color: #d8d8d8; margin-left: 4px; }
.finput { flex: 1; margin-left: 1px; background: #3a3a3a; display: flex; align-items: center; justify-content: flex-end; padding-right: 3px; }

/* sheet */
.sheet { height: 330px; margin-top: 6px; display: flex; background: #262626; border-bottom: 1px solid #0c0c0c; }
.gridwrap { width: 945px; height: 329px; overflow: hidden; background: #fff; }
.grid { table-layout: fixed; width: 945px; border-collapse: collapse; color: #111; font: 10.2px/11px "Liberation Sans", sans-serif; letter-spacing: 0; }
.c0 { width: 18px; } .ca { width: 44px; } .cb { width: 104px; } .cc { width: 143px; } .cd { width: 150px; } .ce { width: 77px; }
.cf { width: 45px; } .cg { width: 45px; } .ch { width: 44px; } .ci { width: 29px; } .cj { width: 61px; } .ck { width: 97px; } .cl { width: 45px; } .cm { width: 43px; }
.h14 > * { height: 14px; } .h15 > * { height: 15px; } .h16 > * { height: 16px; } .h17 > * { height: 17px; }
.grid th { background: #262626; color: #bdbdbd; font: 400 9px/10px "Open Sans", sans-serif; padding: 0; text-align: center; border: 0; border-right: 1px solid #3a3a3a; border-bottom: 1px solid #3a3a3a; }
.grid thead th.sel { background: #606060; color: #e8e8e8; border-bottom: 1px solid #2f8f5b; }
.corner svg { margin: 3px 0 0 7px; }
.grid td { position: relative; border: 1px solid #dedede; padding: 0 1px 0 2px; white-space: nowrap; overflow: hidden; background: #fff; }
.grid td.title { font: 700 13.500px/15px "Liberation Sans", sans-serif; text-align: center; color: #111; border-color: #dedede; overflow: visible; }
.grid td.d { border: 2px solid #141414; }
.c { text-align: center; }
.r { text-align: right; }
.grid td.hd { background: #a6a6a6; font-weight: 700; font-size: 11.400px; text-align: center; overflow: visible; }
.rp { display: flex; justify-content: space-between; padding: 0 3px 0 5px; font-size: 10.400px; }
.f { position: absolute; right: 2px; top: 2px; width: 9px; height: 10px; background: #ededed; border: 1px solid #c8c8c8; }
.f::after { content: ""; position: absolute; left: 1.500px; top: 3px; border: 2.500px solid transparent; border-top: 3px solid #666; border-bottom: 0; }
.grid td.x { border: 1px solid #3f3f3f; font: 9.800px/11px "Lato", sans-serif; color: #222; padding: 0 1px 0 2px; overflow: visible; }
.grid td.x.r { font-size: 9.200px; }
.grid td.xh { color: #fff; font-weight: 700; text-align: center; }
.grid td.nn { text-align: left; padding-left: 6px; }
.grid td.gh { background: #70ad47; }
.grid td.oh { background: #ed7d31; }
.grid td.gz { background: #e2efda; }
.grid td.oz { background: #fce4d6; }
.grid td.ttl { color: #fff; font: 700 10px/11px "Lato", sans-serif; text-align: center; border: 1px solid #4472c4; }
.grid td.blue-t { background: #4472c4; }
.grid td.red-t { background: #ff0000; border-color: #ff0000; }
.grip::after { content: ""; position: absolute; right: 0; bottom: 0; border: 2px solid transparent; border-right-color: #1f4e9c; border-bottom-color: #1f4e9c; }
.err::before { content: ""; position: absolute; left: 0; top: 0; border: 2px solid transparent; border-left-color: #1e7f4a; border-top-color: #1e7f4a; }

.vscroll { width: 15px; display: flex; flex-direction: column; align-items: center; background: #0c0c0c; padding: 2px 0 0; }
.sbtn { flex: none; display: flex; align-items: center; justify-content: center; background: #3a3a3a; border: 1px solid #555; }
.vscroll .sbtn { width: 11px; height: 11px; }
.vthumb { width: 11px; height: 288px; margin: 1px 0 16px; background: #3a3a3a; border: 1px solid #4a4a4a; }

/* sheet tabs */
.sheetbar { height: 18px; display: flex; align-items: center; background: #232323; position: relative; border-bottom: 1px solid #161616; }
.nav { width: 70px; display: flex; gap: 15px; padding-left: 19px; }
.sheettab { width: 42px; height: 17px; margin-top: -1px; background: #fff; border-bottom: 2px solid #1e7145; color: #217346; font: 700 9.500px/16px "Open Sans", sans-serif; text-align: center; }
.addsheet { margin-left: 22px; }
.sdots { margin-left: 428px; width: 6px; font-size: 11px; line-height: 17px; height: 17px; text-align: center; color: #cfcfcf; }
.hscroll { margin-left: 8px; width: 358px; height: 13px; display: flex; align-items: center; }
.hscroll .sbtn { width: 10px; height: 12px; }
.hthumb { width: 309px; height: 12px; background: #3f3f3f; border: 1px solid #4a4a4a; }
.hvoid { width: 28px; height: 12px; background: #0c0c0c; }

/* status */
.status { height: 16px; display: flex; align-items: center; background: #2a2a2a; color: #cfcfcf; position: relative; }
.ready { margin-left: 8px; }
.acc { margin-left: 13px; }
.accs { margin-left: 1px; font-weight: 600; font-size: 8px; color: #e0e0e0; white-space: nowrap; }
.views { margin-left: auto; display: flex; height: 16px; }
.view { width: 28px; display: flex; align-items: center; justify-content: center; }
.view.on { background: #4a4a4a; }
.zoomer { display: flex; align-items: center; padding-left: 1px; width: 127px; }
.zm { width: 12px; text-align: center; font-size: 11px; color: #bdbdbd; }
.track { width: 70px; height: 1px; background: #e0e0e0; position: relative; margin-left: 1px; }
.knob { position: absolute; left: 33px; top: -4px; width: 4px; height: 9px; background: #e8e8e8; }
.pc { margin-left: 6px; font-size: 8.6px; }
```
